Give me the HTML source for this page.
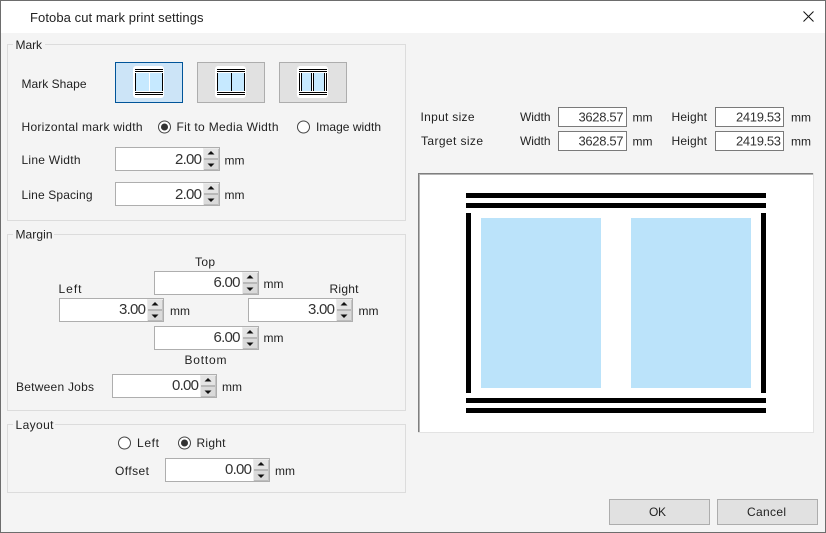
<!DOCTYPE html>
<html><head><meta charset="utf-8"><style>
html,body{margin:0;padding:0;background:#f4f4f4;width:826px;height:533px;overflow:hidden}
svg{display:block}
text{font-family:"Liberation Sans",sans-serif;font-size:12px;fill:#222}
.v{font-size:15px;fill:#333}
.s{font-size:13px;fill:#333}
.t{font-size:13px}
</style></head><body>
<svg xmlns="http://www.w3.org/2000/svg" width="826" height="533" viewBox="0 0 826 533">
<defs>
<g id="spin" shape-rendering="crispEdges">
<rect x="0.5" y="0.5" width="104" height="23" fill="#fff" stroke="#aeaeae"/>
<rect x="88" y="1" width="16" height="22" fill="#ececec"/>
<rect x="89" y="2" width="14" height="9" fill="#e4e4e4"/>
<rect x="89" y="13" width="14" height="9" fill="#dadada"/>
<rect x="89" y="11" width="14" height="2" fill="#b8b8b8"/>
<rect x="89" y="22" width="14" height="1" fill="#bcbcbc"/>
<rect x="103" y="2" width="1" height="21" fill="#c4c4c4"/>
<path d="M96 4l3.5 3.5h-7z" fill="#111" shape-rendering="auto"/>
<path d="M96 20l3.5-3.5h-7z" fill="#111" shape-rendering="auto"/>
</g>
<g id="tb" shape-rendering="crispEdges">
<rect x="0.5" y="0.5" width="68" height="19" fill="#fff" stroke="#7a7a7a"/>
</g>
</defs>

<!-- window -->
<rect width="826" height="533" fill="#f4f4f4"/>
<rect x="0" y="0" width="826" height="33" fill="#fff"/>
<g shape-rendering="crispEdges">
<rect x="0" y="0" width="826" height="1" fill="#6d6d6d"/>
<rect x="0" y="0" width="1" height="533" fill="#6d6d6d"/>
<rect x="825" y="0" width="1" height="533" fill="#6d6d6d"/>
<rect x="0" y="532" width="826" height="1" fill="#6d6d6d"/>
</g>
<text class="t" x="30" y="22" textLength="173.5">Fotoba cut mark print settings</text>
<path d="M803.5 11.5l10 10M813.5 11.5l-10 10" stroke="#111" stroke-width="1" fill="none"/>

<!-- group boxes -->
<g fill="none" stroke="#dcdcdc" shape-rendering="crispEdges">
<rect x="7.5" y="44.5" width="398" height="176"/>
<rect x="7.5" y="234.5" width="398" height="176"/>
<rect x="7.5" y="424.5" width="398" height="68"/>
</g>
<g fill="#f4f4f4" shape-rendering="crispEdges">
<rect x="13" y="43" width="32" height="3"/>
<rect x="13" y="233" width="41" height="3"/>
<rect x="13" y="423" width="42" height="3"/>
</g>
<text x="15.5" y="49" textLength="26.5">Mark</text>
<text x="15.5" y="238.5" textLength="37">Margin</text>
<text x="15.5" y="429" textLength="38">Layout</text>

<!-- mark shape -->
<text x="21.5" y="88" textLength="65">Mark Shape</text>
<g shape-rendering="crispEdges">
<rect x="115.5" y="62.5" width="67" height="40" fill="#cce4f7" stroke="#005499"/>
<rect x="197.5" y="62.5" width="67" height="40" fill="#e1e1e1" stroke="#adadad"/>
<rect x="279.5" y="62.5" width="67" height="40" fill="#e1e1e1" stroke="#adadad"/>
</g>
<!-- icon 1 -->
<rect x="133" y="66" width="31" height="32" rx="3" fill="#fff"/>
<g shape-rendering="crispEdges">
<rect x="136" y="73" width="26" height="18" fill="#c6e9ff"/>
<rect x="149" y="73" width="1" height="18" fill="#fff"/>
<g fill="#000">
<rect x="135" y="69" width="28" height="1"/><rect x="135" y="71" width="28" height="1"/>
<rect x="135" y="92" width="28" height="1"/><rect x="135" y="94" width="28" height="1"/>
<rect x="135" y="73" width="1" height="18"/><rect x="162" y="73" width="1" height="18"/>
</g>
</g>
<!-- icon 2 -->
<rect x="215" y="66" width="31" height="32" rx="3" fill="#fff"/>
<g shape-rendering="crispEdges">
<rect x="218" y="73" width="26" height="18" fill="#c6e9ff"/>
<g fill="#000">
<rect x="217" y="69" width="28" height="1"/><rect x="217" y="71" width="28" height="1"/>
<rect x="217" y="92" width="28" height="1"/><rect x="217" y="94" width="28" height="1"/>
<rect x="217" y="73" width="1" height="18"/><rect x="231" y="73" width="1" height="18"/><rect x="244" y="73" width="1" height="18"/>
</g>
</g>
<!-- icon 3 -->
<rect x="297" y="66" width="31" height="32" rx="3" fill="#fff"/>
<g shape-rendering="crispEdges">
<rect x="302" y="73" width="9" height="18" fill="#c6e9ff"/>
<rect x="314" y="73" width="10" height="18" fill="#c6e9ff"/>
<g fill="#000">
<rect x="299" y="69" width="28" height="1"/><rect x="299" y="71" width="28" height="1"/>
<rect x="299" y="92" width="28" height="1"/><rect x="299" y="94" width="28" height="1"/>
<rect x="299" y="73" width="1" height="18"/><rect x="301" y="73" width="1" height="18"/>
<rect x="311" y="73" width="1" height="18"/><rect x="313" y="73" width="1" height="18"/>
<rect x="324" y="73" width="1" height="18"/><rect x="326" y="73" width="1" height="18"/>
</g>
</g>

<!-- horizontal mark width -->
<text x="21.5" y="131" textLength="121">Horizontal mark width</text>
<circle cx="164.5" cy="127" r="6" fill="#fff" stroke="#444"/>
<circle cx="164.5" cy="127" r="3.5" fill="#333"/>
<text x="176.5" y="131" textLength="102">Fit to Media Width</text>
<circle cx="303.5" cy="127" r="6" fill="#fff" stroke="#444"/>
<text x="316" y="131" textLength="65">Image width</text>

<!-- line width / spacing -->
<text x="21.5" y="164" textLength="59">Line Width</text>
<use href="#spin" x="115" y="147"/>
<text class="v" x="175" y="164" textLength="27">2.00</text>
<text x="224.5" y="164.5" textLength="20">mm</text>
<text x="21.5" y="199" textLength="71">Line Spacing</text>
<use href="#spin" x="115" y="182"/>
<text class="v" x="175" y="199" textLength="27">2.00</text>
<text x="224.5" y="199" textLength="20">mm</text>

<!-- margin -->
<text x="195" y="266" textLength="20">Top</text>
<use href="#spin" x="154" y="271"/>
<text class="v" x="213.5" y="287" textLength="27">6.00</text>
<text x="263.5" y="288" textLength="20">mm</text>
<text x="58.5" y="293" textLength="23">Left</text>
<text x="329.5" y="293" textLength="29">Right</text>
<use href="#spin" x="59" y="298"/>
<text class="v" x="119" y="314" textLength="27">3.00</text>
<text x="170" y="315" textLength="20">mm</text>
<use href="#spin" x="248" y="298"/>
<text class="v" x="308" y="314" textLength="27">3.00</text>
<text x="358.5" y="315" textLength="20">mm</text>
<use href="#spin" x="154" y="326"/>
<text class="v" x="213.5" y="342" textLength="27">6.00</text>
<text x="263.5" y="342" textLength="20">mm</text>
<text x="184.5" y="364" textLength="42">Bottom</text>
<text x="16" y="391" textLength="78">Between Jobs</text>
<use href="#spin" x="112" y="374"/>
<text class="v" x="172" y="390" textLength="27">0.00</text>
<text x="222" y="391" textLength="20">mm</text>

<!-- layout -->
<circle cx="124.5" cy="443" r="6" fill="#fff" stroke="#444"/>
<text x="137" y="447" textLength="22">Left</text>
<circle cx="184.5" cy="443" r="6" fill="#fff" stroke="#444"/>
<circle cx="184.5" cy="443" r="3.5" fill="#333"/>
<text x="196.5" y="447" textLength="29">Right</text>
<text x="115" y="475" textLength="34">Offset</text>
<use href="#spin" x="165" y="458"/>
<text class="v" x="225" y="474" textLength="27">0.00</text>
<text x="275" y="475" textLength="20">mm</text>

<!-- size rows -->
<text x="420.5" y="121" textLength="54">Input size</text>
<text x="520" y="121" textLength="30.5">Width</text>
<use href="#tb" x="558" y="107"/>
<text class="s" x="578.5" y="121.5" textLength="45">3628.57</text>
<text x="632.5" y="121.5" textLength="20">mm</text>
<text x="671.5" y="121" textLength="35.5">Height</text>
<use href="#tb" x="715" y="107"/>
<text class="s" x="736" y="121.5" textLength="45">2419.53</text>
<text x="791" y="121.5" textLength="20">mm</text>
<text x="421" y="145" textLength="62">Target size</text>
<text x="520" y="145" textLength="30.5">Width</text>
<use href="#tb" x="558" y="131"/>
<text class="s" x="578.5" y="145.5" textLength="45">3628.57</text>
<text x="632.5" y="145.5" textLength="20">mm</text>
<text x="671.5" y="145" textLength="35.5">Height</text>
<use href="#tb" x="715" y="131"/>
<text class="s" x="736" y="145.5" textLength="45">2419.53</text>
<text x="791" y="145.5" textLength="20">mm</text>

<!-- preview -->
<g shape-rendering="crispEdges">
<rect x="418" y="173" width="396" height="260" fill="#e3e3e3"/>
<rect x="418" y="173" width="395" height="1" fill="#7f7f7f"/>
<rect x="418" y="173" width="1" height="259" fill="#7f7f7f"/>
<rect x="419" y="174" width="394" height="1" fill="#b4b4b4"/>
<rect x="419" y="174" width="1" height="258" fill="#b4b4b4"/>
<rect x="420" y="175" width="393" height="257" fill="#fff"/>
<rect x="481" y="218" width="120" height="170" fill="#bbe3fa"/>
<rect x="631" y="218" width="120" height="170" fill="#bbe3fa"/>
<g fill="#000">
<rect x="466" y="193" width="300" height="5"/>
<rect x="466" y="203" width="300" height="5"/>
<rect x="466" y="398" width="300" height="5"/>
<rect x="466" y="408" width="300" height="5"/>
<rect x="466" y="213" width="5" height="180"/>
<rect x="761" y="213" width="5" height="180"/>
</g>
<!-- buttons -->
<rect x="609.5" y="499.5" width="100" height="25" fill="#e1e1e1" stroke="#adadad"/>
<rect x="717.5" y="499.5" width="100" height="25" fill="#e1e1e1" stroke="#adadad"/>
</g>
<text x="649" y="516" textLength="17">OK</text>
<text x="747" y="516" textLength="39">Cancel</text>
</svg>
</body></html>
